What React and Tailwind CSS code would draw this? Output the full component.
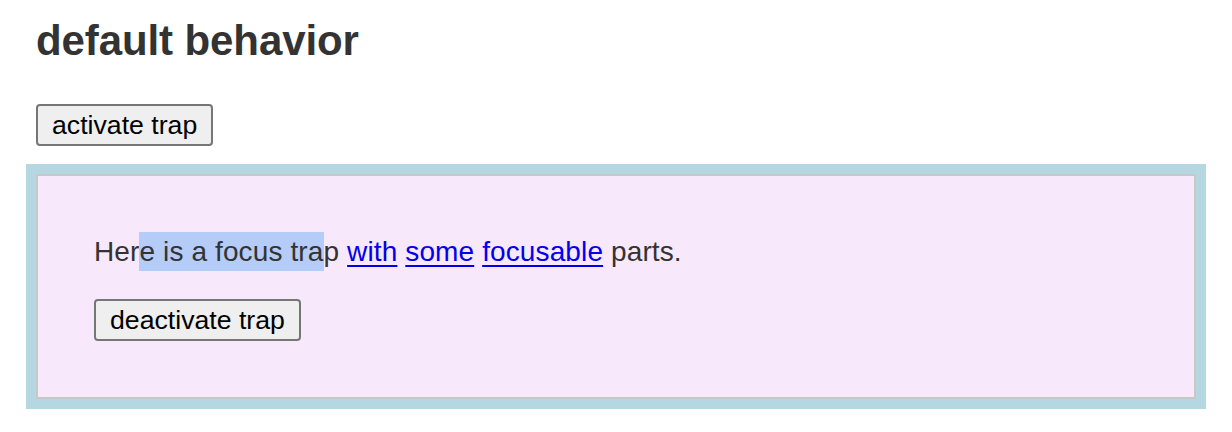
export default function App() {
  const font = { fontFamily: '"Liberation Sans", Arial, Helvetica, sans-serif' };
  return (
    <div className="w-[1232px] h-[432px] bg-white px-[26px] pt-[20px] text-[#333]" style={font}>
      <h2 className="ml-[10px] text-[42px] leading-[42px] font-bold text-[#333] tracking-[-0.1px]">default behavior</h2>
      <button className="ml-[10px] mt-[42px] h-[42px] px-[14px] border-2 border-[#767676] rounded-[4px] bg-[#efefef] text-black text-[26.67px] leading-[30px]">
        activate trap
      </button>
      <div className="mt-[18px] border-[10px] border-[#b4d7e2]">
        <div className="border-2 border-[#c8c8c8] bg-[#f8e8fb] p-[56px]">
          <p className="text-[28px] leading-[39.2px] mb-[28px] text-[#333] tracking-[0.12px]">
            Her<span className="inline-block bg-[#b4ccf7] leading-[39.2px] whitespace-pre">e is a focus tra</span>p{" "}
            <a href="#" className="text-[#0000ee] underline underline-offset-[4px]">with</a>{" "}
            <a href="#" className="text-[#0000ee] underline underline-offset-[4px]">some</a>{" "}
            <a href="#" className="text-[#0000ee] underline underline-offset-[4px]">focusable</a> parts.
          </p>
          <button className="h-[42px] px-[14px] border-2 border-[#767676] rounded-[4px] bg-[#efefef] text-black text-[26.67px] leading-[30px]">
            deactivate trap
          </button>
        </div>
      </div>
    </div>
  );
}
